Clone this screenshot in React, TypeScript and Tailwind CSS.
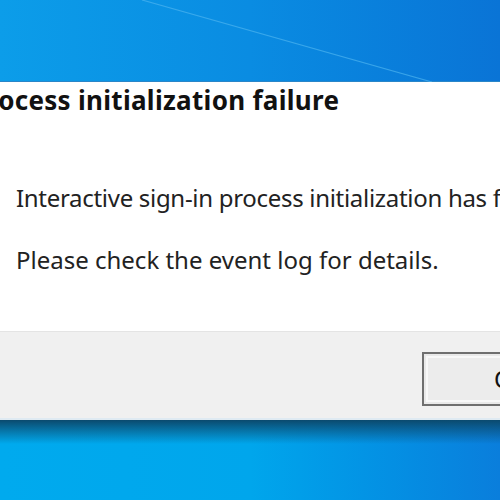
const App = () => {
  return (
    <div className="w-[500px] h-[500px] overflow-hidden flex flex-col bg-[#0a8fe2] font-['Noto_Sans',_'Liberation_Sans',_sans-serif]">
      {/* desktop strip above the dialog */}
      <div className="relative h-[82px] shrink-0 bg-gradient-to-r from-[#0c9de9] via-[#0a8ce2] to-[#0a74d6] border-b border-[#2a86c8]">
        <svg className="absolute inset-0" width="500" height="82">
          <line x1="142" y1="0" x2="432" y2="82" stroke="#4cb4f0" strokeWidth="1.2" opacity="0.7" />
        </svg>
      </div>

      {/* dialog */}
      <div className="shrink-0 bg-white">
        <div className="h-[249px] flex flex-col">
          <h1 className="mt-[1px] -ml-[30px] text-[26px] leading-[34px] tracking-[0.3px] font-bold text-[#111] whitespace-nowrap">
            process initialization failure
          </h1>
          <p className="mt-[65px] ml-[16px] text-[24px] leading-[32px] tracking-[-0.3px] text-[#222] whitespace-nowrap">
            Interactive sign-in process initialization has failed.
          </p>
          <p className="mt-[30px] ml-[16px] text-[24px] leading-[32px] text-[#222] whitespace-nowrap">
            Please check the event log for details.
          </p>
        </div>
        <div className="h-[87px] bg-[#f0f0f0] border-t border-[#e4e4e4] flex items-start">
          <div className="ml-auto mt-[20px] w-[100px] -mr-[22px] h-[54px] border-2 border-[#6f6f6f] bg-[#e9e9e9] p-[2px]">
            <div className="h-full border-2 border-[#f8f8f8] bg-[#ececec] flex items-center pl-[66px] text-[24px] text-[#111]">
              OK
            </div>
          </div>
        </div>
        <div className="h-[2px] bg-[#dfeaf2]" />
      </div>

      {/* desktop below */}
      <div className="flex-1 bg-gradient-to-r from-[#00aaee] via-[#00a6ec] to-[#0a7edc] relative">
        <div className="absolute inset-x-0 top-0 h-[24px] bg-gradient-to-b from-[#0b4a6e] to-transparent" />
      </div>
    </div>
  );
};

export default App;
